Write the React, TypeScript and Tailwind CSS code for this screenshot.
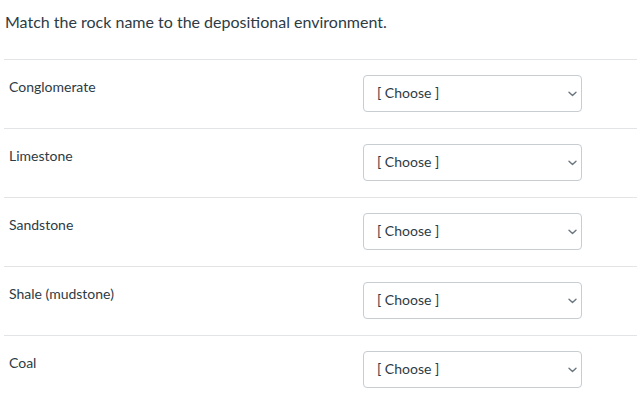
import React from 'react';

const rocks = ['Conglomerate', 'Limestone', 'Sandstone', 'Shale (mudstone)', 'Coal'];

const Chevron: React.FC = () => (
  <svg width="9" height="6" viewBox="0 0 9 6" fill="none" className="shrink-0 mt-[2px]">
    <path d="M1 1.2 L4.5 4.6 L8 1.2" stroke="#6b7780" strokeWidth="1.4" strokeLinecap="round" strokeLinejoin="round" />
  </svg>
);

const MatchRow: React.FC<{ label: string }> = ({ label }) => (
  <div className="ml-[4px] border-t border-[#e2e4e6] h-[69px] flex items-start">
    <div className="w-[359px] pl-[5px] pt-[17px] text-[14px] leading-[20px] text-[#2d3b45]">{label}</div>
    <div className="mt-[15px] w-[219px] h-[37px] border border-[#c7cdd1] rounded-[4px] bg-white flex items-center justify-between pl-[13px] pr-[4px] pb-[2px]">
      <span className="text-[14px] text-[#2d3b45]">[ Choose ]</span>
      <Chevron />
    </div>
  </div>
);

export default function App() {
  return (
    <div className="w-[637px] h-[400px] bg-white overflow-hidden" style={{ fontFamily: 'Lato, "Noto Sans", sans-serif' }}>
      <div className="pl-[5px] pt-[10px] pb-[25px] text-[16px] leading-[24px] text-[#2d3b45]">
        Match the rock name to the depositional environment.
      </div>
      {rocks.map(r => (
        <MatchRow key={r} label={r} />
      ))}
    </div>
  );
}
